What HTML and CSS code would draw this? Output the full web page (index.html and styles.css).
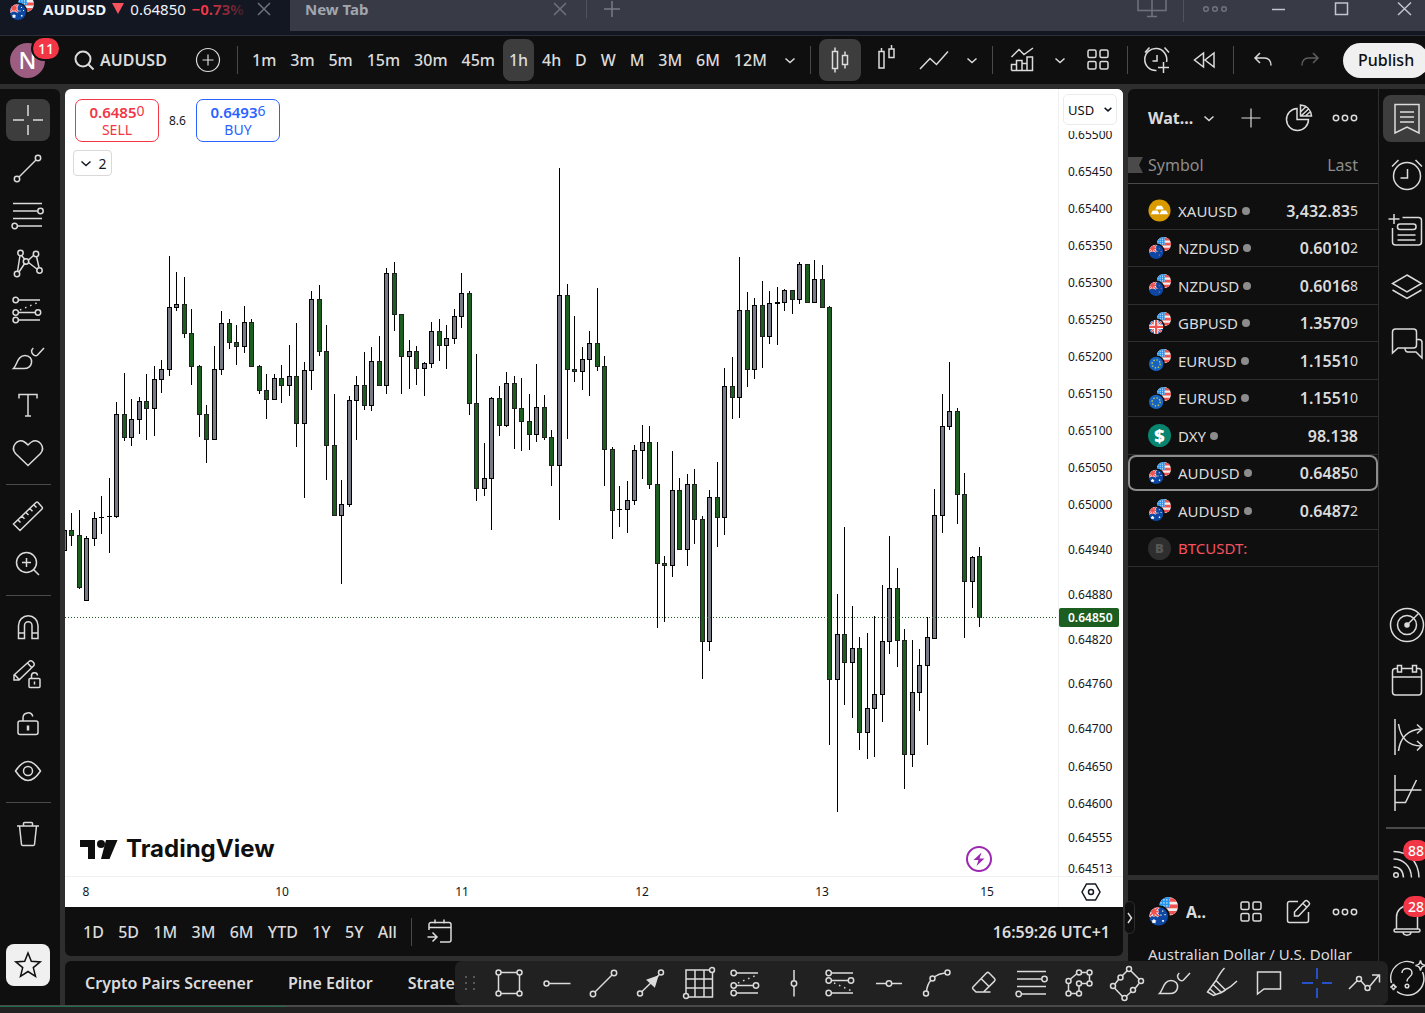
FILE: index.html
```html
<!DOCTYPE html>
<html lang="en">
<head>
    <meta charset="UTF-8">
    <meta name="viewport" content="width=device-width, initial-scale=1.0">
    <title>AUDUSD 0.64850</title>
    <link rel="stylesheet" href="styles.css">
</head>
<body>

    <!-- Icon sprite -->
    <svg class="sprite" aria-hidden="true">
        <symbol id="i-cross" viewBox="0 0 32 32"><path d="M16 1v11M16 21v10M1 16h11M21 16h10"/></symbol>
        <symbol id="i-trend" viewBox="0 0 32 32"><path d="M7 25L24 8"/><circle cx="5" cy="27" r="2.7"/><circle cx="26" cy="6" r="2.7"/></symbol>
        <symbol id="i-fib" viewBox="0 0 32 32"><path d="M1 4.5h29M1 12h24.5M1 19.5h29M5 27h25"/><circle cx="28.5" cy="12" r="2.7"/><circle cx="2.7" cy="27" r="2.7"/></symbol>
        <symbol id="i-pattern" viewBox="0 0 32 32"><path d="M5.500 24.500L8 8.500M7 25l6-9M9.500 8.500l3.500 4M16.500 13l5.500-5M16.500 15.500l9 7M24.500 9.500L27 20.500"/><circle cx="8.500" cy="6" r="2.7"/><circle cx="24" cy="7" r="2.7"/><circle cx="14" cy="14.500" r="2.7"/><circle cx="5" cy="27" r="2.7"/><circle cx="27.500" cy="23.500" r="2.7"/></symbol>
        <symbol id="i-forecast" viewBox="0 0 32 32"><path d="M6.500 6H28M6.500 18.500h17M6.500 26H28"/><path stroke-dasharray="1.500 4" d="M8 16l19-8"/><circle cx="3.700" cy="6" r="2.7"/><circle cx="3.700" cy="18.500" r="2.7"/><circle cx="26" cy="18.500" r="2.7"/><circle cx="3.700" cy="26" r="2.7"/></symbol>
        <symbol id="i-brush" viewBox="0 0 32 32"><path d="M1.500 26.500C5 23.500 5.500 13.500 13 13.500c4.500 0 7.500 3.500 6.500 7.500-.8 3.500-3.500 5.500-7.500 5.500zM32 6l-6.500 7c-1 1-2.500 1-3.700 0-2.300-1.500-3.300-4.500-.5-7"/></symbol>
        <symbol id="i-text" viewBox="0 0 32 32"><path d="M7 9.500V5.500h18v4M16 5.500v21.500M13 27h6"/></symbol>
        <symbol id="i-heart" viewBox="0 0 32 32"><path d="M16 28.500L3.500 16.500C-2 10 5.500.500 12.500 5 14 6 15 7 16 8c1-1 2-2 3.500-3C26.500.500 34 10 28.500 16.500z"/></symbol>
        <symbol id="i-ruler" viewBox="0 0 32 32"><path d="M1.500 24L24 2.500c.6-.6 1.400-.6 2 0L30 7c.6.600.6 1.400 0 2L8 30.500zM6 20l2.500 2.500M10 16.200l2.500 2.500M14 12.500l2.500 2.500M18 8.700l2.500 2.500M22 5l2.500 2.500"/></symbol>
        <symbol id="i-zoom" viewBox="0 0 32 32"><circle cx="14.500" cy="14.500" r="10"/><path d="M21.500 21.500l5.500 5.500M14.500 10v9M10 14.500h9"/></symbol>
        <symbol id="i-magnet" viewBox="0 0 32 32"><path d="M6.500 27.500V14.500a9.700 9.700 0 0 1 19.500 0v13h-6V14.500a3.700 3.700 0 0 0-7.500 0v13zM6.500 22h6M20 22h6"/></symbol>
        <symbol id="i-penlock" viewBox="0 0 32 32"><path d="M2 21v-5L17 2.500c1-1 2.500-1 3.500 0l1 1c1 1 1 2.500 0 3.500L7 21zM2.500 15.500L7.500 21M15.500 4l4.500 5M18 19.500h9c.6 0 1 .4 1 1v7c0 .6-.4 1-1 1h-9c-.6 0-1-.4-1-1v-7c0-.6.4-1 1-1zM19.500 19.500v-2.500a3 3 0 0 1 6-.500M22.500 22.500v3"/></symbol>
        <symbol id="i-lock" viewBox="0 0 32 32"><rect x="6" y="14" width="20" height="13.500" rx="2"/><path d="M11 14v-3.500a5 5 0 0 1 9.800-1"/><path stroke-width="2.500" d="M16 18.500v5"/></symbol>
        <symbol id="i-eye" viewBox="0 0 32 32"><path d="M3.500 16C7.500 10 11.500 6.500 16 6.500s8.500 3.500 12.500 9.500c-4 6-8 9.500-12.500 9.500S7.500 22 3.500 16z"/><circle cx="16" cy="16" r="4.500"/></symbol>
        <symbol id="i-trash" viewBox="0 0 32 32"><path d="M5 8h22M7.500 8l2 18.500c.1.700.6 1 1.200 1h10.600c.6 0 1.100-.3 1.200-1L24.500 8M11.500 8V5.500c0-.6.4-1 1-1h7c.6 0 1 .4 1 1V8"/></symbol>
        <symbol id="i-star" viewBox="0 0 32 32"><path d="M16 4l3.300 8.300 8.900.6-6.900 5.700 2.200 8.700L16 22.500l-7.500 4.800 2.200-8.700-6.900-5.700 8.900-.6z"/></symbol>
        <symbol id="i-search" viewBox="0 0 32 32"><circle cx="15" cy="15" r="7.500"/><path d="M20.500 20.500l5 5"/></symbol>
        <symbol id="i-addcircle" viewBox="0 0 32 32"><circle cx="16" cy="16" r="11.500"/><path d="M16 10.500v11M10.500 16h11"/></symbol>
        <symbol id="i-chevron" viewBox="0 0 16 16"><path d="M3.500 6.500L8 10.500l4.500-4"/></symbol>
        <symbol id="i-candles" viewBox="0 0 32 32"><path d="M8.500 7.500h5v17h-5zM11 3.500v4M11 24.500v4M18.500 11.500h5v9h-5zM21 7.500v4M21 20.500v4"/></symbol>
        <symbol id="i-hilo" viewBox="0 0 32 32"><path d="M8 7.500h5v16.500H8zM10.500 4v3.500M18 5h5v8.500h-5zM20.500 1v4"/></symbol>
        <symbol id="i-line" viewBox="0 0 32 32"><path d="M2 25l10-10.500 6.500 6L30 7.500"/></symbol>
        <symbol id="i-indicators" viewBox="0 0 32 32"><path d="M5.500 13l7.500-7.500 5 5L27 4M5.500 26.500v-6h5v6M10.500 26.500V16.500h5.500v10M16 26.500v-7h5v7M21 26.500V13h5.500v13.500zM5.500 26.500h21"/></symbol>
        <symbol id="i-grid" viewBox="0 0 32 32"><rect x="6" y="6" width="8" height="7.500" rx="1.500"/><rect x="18" y="6" width="8" height="7.500" rx="1.500"/><rect x="6" y="17.500" width="8" height="7.500" rx="1.500"/><rect x="18" y="17.500" width="8" height="7.500" rx="1.500"/></symbol>
        <symbol id="i-alertadd" viewBox="0 0 32 32"><path d="M15.500 26.500A11 11 0 1 1 25.500 18M16 11v6h-4.500M4 8.500l4.500-5M23.500 3.500l4.500 5M22.500 18v11M17 23.500h11"/></symbol>
        <symbol id="i-rewind" viewBox="0 0 32 32"><path d="M15.500 9v14L6.500 16zM26 9v14L17 16z"/></symbol>
        <symbol id="i-undo" viewBox="0 0 32 32"><path d="M13 9L8 14l5 5M8 14h9.500c4 0 6.500 3 6.500 7.500"/></symbol>
        <symbol id="i-redo" viewBox="0 0 32 32"><path d="M19 9l5 5-5 5M24 14h-9.500c-4 0-6.500 3-6.500 7.500"/></symbol>
        <symbol id="i-plus" viewBox="0 0 32 32"><path d="M16 6.500v19M6.500 16h19"/></symbol>
        <symbol id="i-pie" viewBox="0 0 32 32"><path d="M15 6.500A11 11 0 1 0 26.500 17.500H15zM18.500 3c6.500.5 10.500 5 11 11h-11zM19 9.500l5-5M19 14l8-7.500M24 13.500l4.500-4"/></symbol>
        <symbol id="i-dots" viewBox="0 0 32 32"><circle cx="7" cy="16" r="2.700"/><circle cx="16" cy="16" r="2.700"/><circle cx="25" cy="16" r="2.700"/></symbol>
        <symbol id="i-edit" viewBox="0 0 32 32"><path d="M16 5.500H7.500c-1.100 0-2 .9-2 2v17c0 1.100.9 2 2 2h17c1.100 0 2-.9 2-2V16M12.500 20v-4L23 5c.8-.8 1.700-.8 2.500 0l1.500 1.500c.8.800.8 1.700 0 2.500L16.500 20zM21 7.500l3.500 3.500"/></symbol>
        <symbol id="i-goto" viewBox="0 0 32 32"><path d="M5 14V8.500c0-1.100.9-2 2-2h18c1.100 0 2 .9 2 2V24c0 1.100-.9 2-2 2h-9M5 11.500h22M11 3.500v4M20 3.500v4M3.500 21h9M8.500 16.500l4.500 4.500-4.500 4.500"/></symbol>
        <symbol id="i-list" viewBox="0 0 32 32"><path d="M4 1.500h24v28.500l-12-6-12 6zM9 9h14M9 14h14M9 19h14"/></symbol>
        <symbol id="i-alarm" viewBox="0 0 32 32"><circle cx="16" cy="17" r="13.500"/><path d="M16.500 10v9h-7M1 7.500L7.500 1M24.500 1L31 7.500"/></symbol>
        <symbol id="i-news" viewBox="0 0 32 32"><path d="M11.500 2.500H27.500c1.700 0 3 1.300 3 3V27c0 1.700-1.300 3-3 3H4.500c-1.700 0-3-1.300-3-3V13M3-1v10M-2.500 4h11M6.500 20h18M6.500 25h18"/><rect x="6.500" y="9" width="18.500" height="5.500" rx="2.500"/></symbol>
        <symbol id="i-layers" viewBox="0 0 32 32"><path d="M16 4l14.500 8.500L16 21 1.500 12.500zM1.500 19L16 27.500 30.500 19"/></symbol>
        <symbol id="i-chat" viewBox="0 0 32 32"><path d="M1.500 26V5c0-1.700 1.300-3 3-3h18c1.700 0 3 1.300 3 3v13c0 1.700-1.300 3-3 3H7zM25.500 12.500H28c1.700 0 3 1.300 3 3V31l-6-6h-8c-2 0-3-1.500-3-4"/></symbol>
        <symbol id="i-radar" viewBox="0 0 36 36"><circle cx="18" cy="18" r="16.500"/><circle cx="18" cy="18" r="9.500"/><circle cx="18" cy="18" r="2" fill="currentColor"/><path d="M18 18L29.500 6.500"/></symbol>
        <symbol id="i-calendar" viewBox="0 0 32 32"><path d="M6 3.500H4.500c-1.700 0-3 1.300-3 3V27c0 1.700 1.300 3 3 3h23c1.700 0 3-1.300 3-3V6.500c0-1.700-1.300-3-3-3H26M10.500 3.500h11M1.500 12h29M6.500.500h4V7h-4zM21.500.500h4V7h-4z"/></symbol>
        <symbol id="i-paths" viewBox="0 0 36 36"><path d="M6 0v36M9.500 5c2 13 9 22 23 22M9.500 32C11 19 19 10.500 32.500 10M28 5.500l5 4.500-5 4.500M28 22l5 4.500-5 5"/></symbol>
        <symbol id="i-range" viewBox="0 0 36 36"><path d="M6 0v36M6 15h26.500M6 27.500h10.500L27.500 5"/></symbol>
        <symbol id="i-feed" viewBox="0 0 32 32"><circle cx="5" cy="28" r="2.300"/><path d="M2.500 20c6 0 9.500 3.500 10 10.500M2.500 12c10 0 17.500 7 18 18.500M2.500 4.500C17 4.500 27.500 14 28 30.500"/></symbol>
        <symbol id="i-bell" viewBox="0 0 32 32"><path d="M5.500 26V14C5.500 8 10 3 16 3s10.500 5 10.500 11v12M4.500 26h23c2 0 2 3 0 3h-23c-2 0-2-3 0-3zM12 29.500c.5 3.500 7.500 3.500 8 0"/></symbol>
        <symbol id="i-help" viewBox="0 0 36 36"><path d="M25 3A16.500 16.500 0 0 0 2.500 23M8 31.500A16.500 16.500 0 0 0 33.500 12M13 13c0-6 10-6 10 0 0 4.500-5 3.500-5 8.500M31.500.500c.8 3.500 1.500 4.200 5 5-3.500.8-4.200 1.500-5 5-.8-3.500-1.500-4.200-5-5 3.500-.8 4.200-1.500 5-5zM4.500 24c.5 2 1 2.500 3 3-2 .5-2.500 1-3 3-.5-2-1-2.500-3-3 2-.5 2.500-1 3-3z"/><circle cx="18" cy="26" r="1.800"/></symbol>
        <symbol id="i-rect" viewBox="0 0 32 32"><path d="M5.500 8v16M26.500 8v16M8 5.500h16M8 26.500h16"/><circle cx="5.500" cy="5.500" r="2.500"/><circle cx="26.500" cy="5.500" r="2.500"/><circle cx="5.500" cy="26.500" r="2.500"/><circle cx="26.500" cy="26.500" r="2.500"/></symbol>
        <symbol id="i-hray" viewBox="0 0 32 32"><path d="M9 16.500h21.500"/><circle cx="6.500" cy="16.500" r="2.500"/></symbol>
        <symbol id="i-arrow" viewBox="0 0 32 32"><path d="M6.500 25L24 8"/><path d="M22.500 9.500l-3 10-7-6.500z" fill="currentColor"/><circle cx="5" cy="26.500" r="2.500"/><circle cx="26" cy="5.500" r="2.500"/></symbol>
        <symbol id="i-fibgrid" viewBox="0 0 32 32"><path d="M3 26.500V3h24M29.500 5.500V30H5M12 3v27M21 3v27M3 12h26.500M3 21h26.500"/><circle cx="29" cy="3" r="2.500"/><circle cx="3" cy="29" r="2.500"/></symbol>
        <symbol id="i-vline" viewBox="0 0 32 32"><path d="M16 3v10.500M16 19v10.500"/><circle cx="16" cy="16.500" r="2.700"/></symbol>
        <symbol id="i-short" viewBox="0 0 32 32"><path d="M6.500 6H28M6.500 13.500h17M6.500 26H28"/><path stroke-dasharray="1.500 4" d="M9 16l18 8"/><circle cx="3.700" cy="6" r="2.7"/><circle cx="3.700" cy="13.500" r="2.7"/><circle cx="26" cy="13.500" r="2.7"/><circle cx="3.700" cy="26" r="2.7"/></symbol>
        <symbol id="i-hline" viewBox="0 0 32 32"><path d="M3 16.500h10.500M19 16.500h10"/><circle cx="16" cy="16.500" r="2.700"/></symbol>
        <symbol id="i-curve" viewBox="0 0 32 32"><path d="M5.500 24c.5-4 2-8 4.500-11M13 10c3-2 6.500-3.500 11-4"/><circle cx="5" cy="26.500" r="2.500"/><circle cx="11.500" cy="11.500" r="2.500"/><circle cx="26.500" cy="5.500" r="2.500"/></symbol>
        <symbol id="i-eraser" viewBox="0 0 32 32"><path d="M5 20L18.500 6c.8-.8 1.800-.8 2.600 0l5.400 5.500c.8.800.8 1.800 0 2.600L15.500 25H8l-3-3c-.6-.6-.6-1.400 0-2zM13 11.500l8.500 8.500M15.500 25h7"/></symbol>
        <symbol id="i-polyline" viewBox="0 0 32 32"><path d="M5.500 24V16M7.500 12l6-5M18 5.500h5.500M26.500 8v6M24 16.500h-5.500M16 19v5.500M8 26.500h5.500"/><circle cx="5.500" cy="26.500" r="2.500"/><circle cx="5.500" cy="14" r="2.500"/><circle cx="16" cy="5.500" r="2.500"/><circle cx="26.500" cy="5.500" r="2.500"/><circle cx="26.500" cy="16.500" r="2.500"/><circle cx="16" cy="16.500" r="2.500"/><circle cx="16" cy="26.500" r="2.500"/></symbol>
        <symbol id="i-rotated" viewBox="0 0 36 36"><path d="M6 19l3.500-4.500M13.500 10.500l5-5M22 6l8.500 8.500M30 18.500l-4 5M22 27l-4.500 4M13.500 31.500L5.500 23"/><circle cx="4" cy="21" r="2.500"/><circle cx="11.500" cy="12.500" r="2.500"/><circle cx="20" cy="4" r="2.500"/><circle cx="32" cy="16" r="2.500"/><circle cx="24" cy="25" r="2.500"/><circle cx="15.500" cy="33" r="2.500"/></symbol>
        <symbol id="i-marker" viewBox="0 0 32 32"><path d="M18.500 1C15 4.500 13 8 10 13.500M31 14c-4 4-7 6.500-12 9M9.500 13l10 10M10 13.500l-3 4 8.500 8 4-2.500M7 17.500L1.500 25l6 3.500 8-3M4 22l6 5.500"/></symbol>
        <symbol id="i-callout" viewBox="0 0 32 32"><path d="M4.500 5h23v17H11l-6.500 5z"/></symbol>
        <symbol id="i-zigzag" viewBox="0 0 32 32"><path d="M1 22l8-8M13 14l4.500 5M22 19L31 8M24 8h7.500v7.500"/><circle cx="11" cy="12" r="2.500"/><circle cx="19.500" cy="21" r="2.500"/></symbol>

        <!-- Flags -->
        <symbol id="f-us" viewBox="0 0 16 16"><clipPath id="round"><circle cx="8" cy="8" r="8"/></clipPath><g clip-path="url(#round)" stroke="none"><path fill="#f0f0f0" d="M0 0h16v16H0z"/><path fill="#ef5350" d="M0 1h16v3H0zM0 6.500h16v3H0zM0 12h16v3H0z"/><path fill="#2196f3" d="M0 0h9v9H0z"/><path stroke="#bbdefb" stroke-dasharray="1 1.500" d="M1 2.500h8M1 5h8M1 7.500h8"/></g></symbol>
        <symbol id="f-au" viewBox="0 0 16 16"><g clip-path="url(#round)" stroke="none"><path fill="#0d47a1" d="M0 0h16v16H0z"/><path stroke="#fff" stroke-width="2.500" d="M0 0l8 8M0 8L8 0M4 0v8M0 4h8"/><path stroke="#ef5350" d="M0 0l8 8M0 8L8 0M4 0v8M0 4h8"/><path fill="#fff" d="M4 10l.8 1.200 1.400.3-.9 1.100.1 1.400L4 13.500 2.600 14l.1-1.400-.9-1.100 1.400-.3zM11 3h1v1h-1zM9.500 6.500h1v1h-1zM13 6h1v1h-1zM11 11h1.500v1.500H11z"/></g></symbol>
        <symbol id="f-nz" viewBox="0 0 16 16"><g clip-path="url(#round)" stroke="none"><path fill="#0d47a1" d="M0 0h16v16H0z"/><path stroke="#fff" stroke-width="2.500" d="M0 0l8 8M0 8L8 0M4 0v8M0 4h8"/><path stroke="#ef5350" d="M0 0l8 8M0 8L8 0M4 0v8M0 4h8"/><path fill="#ef5350" d="M11 4h1.200v1.200H11zM9 7h1.200v1.200H9zM13 7h1.200v1.200H13zM11 11h1.200v1.200H11z"/></g></symbol>
        <symbol id="f-gb" viewBox="0 0 16 16"><g clip-path="url(#round)" stroke="none"><path fill="#1565c0" d="M0 0h16v16H0z"/><path stroke="#fff" stroke-width="2.500" d="M0 0l16 16M16 0L0 16"/><path stroke="#ef5350" d="M0 0l16 16M16 0L0 16"/><path stroke="#fff" stroke-width="5" d="M8 0v16M0 8h16"/><path stroke="#ef5350" stroke-width="2.500" d="M8 0v16M0 8h16"/></g></symbol>
        <symbol id="f-eu" viewBox="0 0 16 16"><circle cx="8" cy="8" r="8" fill="#1565c0" stroke="none"/><circle cx="8" cy="8" r="4.500" stroke="#d4cf5a" stroke-width="1.500" stroke-dasharray="1.500 2"/></symbol>
        <symbol id="p-au" viewBox="0 0 24 24"><use href="#f-us" x="9" y="0" width="15" height="15"/><circle cx="8.500" cy="15.500" r="9" fill="#0f0f0f" stroke="none"/><use href="#f-au" x="1" y="8" width="15" height="15"/></symbol>
        <symbol id="p-nz" viewBox="0 0 24 24"><use href="#f-us" x="9" y="0" width="15" height="15"/><circle cx="8.500" cy="15.500" r="9" fill="#0f0f0f" stroke="none"/><use href="#f-nz" x="1" y="8" width="15" height="15"/></symbol>
        <symbol id="p-gb" viewBox="0 0 24 24"><use href="#f-us" x="9" y="0" width="15" height="15"/><circle cx="8.500" cy="15.500" r="9" fill="#0f0f0f" stroke="none"/><use href="#f-gb" x="1" y="8" width="15" height="15"/></symbol>
        <symbol id="p-eu" viewBox="0 0 24 24"><use href="#f-us" x="9" y="0" width="15" height="15"/><circle cx="8.500" cy="15.500" r="9" fill="#0f0f0f" stroke="none"/><use href="#f-eu" x="1" y="8" width="15" height="15"/></symbol>
        <symbol id="p-gold" viewBox="0 0 24 24"><circle cx="12" cy="12" r="11.500" fill="#d99a00" stroke="none"/><path fill="#fff" stroke="none" d="M9.500 7h5l2 4h-9zM5 12h5l2 4H3zM14 12h5l2 4h-9z"/></symbol>
    </svg>

    <div class="app">
        <header class="titlebar">
            <div class="tab active">
                <svg class="tab-flag" viewBox="0 0 24 20" aria-hidden="true"><use href="#f-us" x="8" y="-4" width="16" height="16"/><circle cx="8" cy="12" r="9.500" fill="#131722" stroke="none"/><use href="#f-au" x="0" y="4" width="16" height="16"/></svg>
                <strong>AUDUSD</strong>
                <span class="down"></span>
                <span>0.64850</span>
                <strong class="fade">−0.73%</strong>
                <button class="tab-x" aria-label="Close tab"><svg viewBox="0 0 14 14"><path d="M1 1l12 12M13 1L1 13"/></svg></button>
            </div>
            <div class="tab">
                <strong>New Tab</strong>
                <button class="tab-x" aria-label="Close tab"><svg viewBox="0 0 14 14"><path d="M1 1l12 12M13 1L1 13"/></svg></button>
            </div>
            <button class="tab-new" aria-label="New tab"><svg viewBox="0 0 16 18"><path d="M8 1v16M0 9h16"/></svg></button>
            <div class="window-buttons">
                <button class="dim" aria-label="Layout"><svg viewBox="0 0 30 18"><path d="M1 0v10.500h28V0M15 0v16.500M10 16.500h10"/></svg></button>
                <button class="dim more" aria-label="Menu"><svg viewBox="0 0 30 18"><circle cx="6" cy="9" r="2.300"/><circle cx="15" cy="9" r="2.300"/><circle cx="24" cy="9" r="2.300"/></svg></button>
                <button aria-label="Minimize"><svg viewBox="0 0 30 18"><path d="M9 9.500h13"/></svg></button>
                <button aria-label="Maximize"><svg viewBox="0 0 30 18"><path d="M9.500 3h12v11.500h-12z"/></svg></button>
                <button aria-label="Close"><svg viewBox="0 0 30 18"><path d="M9 2.500l13 12.500M22 2.500L9 15"/></svg></button>
            </div>
        </header>

        <nav class="toolbar">
            <button class="avatar" aria-label="Account">N<span class="badge">11</span></button>
            <button class="symbol"><svg class="icon"><use href="#i-search"/></svg>AUDUSD</button>
            <button class="tool" aria-label="Compare"><svg class="icon thin"><use href="#i-addcircle"/></svg></button>
            <span class="sep"></span>
            <div class="intervals">
                <button>1m</button>
                <button>3m</button>
                <button>5m</button>
                <button>15m</button>
                <button>30m</button>
                <button>45m</button>
                <button class="on">1h</button>
                <button>4h</button>
                <button>D</button>
                <button>W</button>
                <button>M</button>
                <button>3M</button>
                <button>6M</button>
                <button>12M</button>
            </div>
            <button class="more-btn" aria-label="More intervals"><svg class="chev"><use href="#i-chevron"/></svg></button>
            <span class="sep"></span>
            <button class="tool on" aria-label="Candles"><svg class="icon"><use href="#i-candles"/></svg></button>
            <button class="tool" aria-label="Hollow candles"><svg class="icon"><use href="#i-hilo"/></svg></button>
            <button class="tool" aria-label="Line"><svg class="icon"><use href="#i-line"/></svg></button>
            <button class="more-btn" aria-label="More styles"><svg class="chev"><use href="#i-chevron"/></svg></button>
            <span class="sep"></span>
            <button class="tool" aria-label="Indicators"><svg class="icon"><use href="#i-indicators"/></svg></button>
            <button class="more-btn" aria-label="More indicators"><svg class="chev"><use href="#i-chevron"/></svg></button>
            <button class="tool" aria-label="Layouts"><svg class="icon"><use href="#i-grid"/></svg></button>
            <span class="sep"></span>
            <button class="tool" aria-label="Alert"><svg class="icon"><use href="#i-alertadd"/></svg></button>
            <button class="tool" aria-label="Replay"><svg class="icon"><use href="#i-rewind"/></svg></button>
            <span class="sep"></span>
            <button class="tool" aria-label="Undo"><svg class="icon"><use href="#i-undo"/></svg></button>
            <button class="tool off" aria-label="Redo"><svg class="icon"><use href="#i-redo"/></svg></button>
            <button class="publish">Publish</button>
        </nav>

        <div class="main">
            <aside class="drawing">
                <div class="group group-lines">
                    <button class="tool on" aria-label="Cross"><svg class="icon"><use href="#i-cross"/></svg></button>
                    <button class="tool" aria-label="Trend line"><svg class="icon"><use href="#i-trend"/></svg></button>
                    <button class="tool" aria-label="Fib retracement"><svg class="icon"><use href="#i-fib"/></svg></button>
                    <button class="tool" aria-label="Patterns"><svg class="icon"><use href="#i-pattern"/></svg></button>
                    <button class="tool" aria-label="Forecast"><svg class="icon"><use href="#i-forecast"/></svg></button>
                    <button class="tool" aria-label="Brush"><svg class="icon"><use href="#i-brush"/></svg></button>
                    <button class="tool" aria-label="Text"><svg class="icon"><use href="#i-text"/></svg></button>
                    <button class="tool" aria-label="Icons"><svg class="icon"><use href="#i-heart"/></svg></button>
                </div>
                <hr>
                <div class="group">
                    <button class="tool" aria-label="Measure"><svg class="icon"><use href="#i-ruler"/></svg></button>
                    <button class="tool" aria-label="Zoom in"><svg class="icon"><use href="#i-zoom"/></svg></button>
                </div>
                <hr>
                <div class="group">
                    <button class="tool" aria-label="Magnet"><svg class="icon"><use href="#i-magnet"/></svg></button>
                    <button class="tool" aria-label="Keep drawing"><svg class="icon"><use href="#i-penlock"/></svg></button>
                    <button class="tool" aria-label="Lock"><svg class="icon"><use href="#i-lock"/></svg></button>
                    <button class="tool" aria-label="Hide"><svg class="icon"><use href="#i-eye"/></svg></button>
                </div>
                <hr>
                <div class="group">
                    <button class="tool" aria-label="Remove"><svg class="icon"><use href="#i-trash"/></svg></button>
                </div>
                <button class="tool star" aria-label="Favorites"><svg class="icon"><use href="#i-star"/></svg></button>
            </aside>

            <section class="center">
                <div class="chart">
                    <div class="pane">
                        <svg class="plot" id="plot"></svg>
                        <div class="trade">
                            <button class="sell"><b>0.6485<sup>0</sup></b>SELL</button>
                            <span>8.6</span>
                            <button class="buy"><b>0.6493<sup>6</sup></b>BUY</button>
                        </div>
                        <button class="legend"><svg class="chev"><use href="#i-chevron"/></svg>2</button>
                        <div class="brand">
                            <svg viewBox="0 0 38 19" aria-hidden="true"><path d="M0 0h15v19H8V7H0zM26 0h11.500l-8 19H21z"/><circle cx="21" cy="4" r="4"/></svg>
                            TradingView
                        </div>
                        <button class="flash" aria-label="Events"><svg viewBox="0 0 28 28"><circle cx="14" cy="14" r="12"/><path class="bolt" d="M16.500 7.500L8.500 15h5l-2 6 8-7.500h-5z"/></svg></button>
                    </div>
                    <div class="price-axis">
                        <svg class="prices" id="prices"></svg>
                        <div class="currency">
                            <select aria-label="Currency"><option>USD</option></select>
                            <svg class="chev"><use href="#i-chevron"/></svg>
                        </div>
                    </div>
                    <svg class="time-axis" id="times"></svg>
                    <button class="gear" aria-label="Chart settings"><svg viewBox="0 0 20 18"><path d="M5.500 1h9L19 9l-4.500 8h-9L1 9z"/><circle cx="10" cy="9" r="2.500"/></svg></button>
                </div>
                <div class="range-bar">
                    <div class="ranges">
                        <button>1D</button>
                        <button>5D</button>
                        <button>1M</button>
                        <button>3M</button>
                        <button>6M</button>
                        <button>YTD</button>
                        <button>1Y</button>
                        <button>5Y</button>
                        <button>All</button>
                    </div>
                    <span class="sep"></span>
                    <button class="tool" aria-label="Go to date"><svg class="icon"><use href="#i-goto"/></svg></button>
                    <button class="clock">16:59:26 UTC+1</button>
                </div>
                <div class="bottom-tabs">
                    <button>Crypto Pairs Screener</button>
                    <button>Pine Editor</button>
                    <button>Strategy Tester</button>
                </div>
            </section>

            <section class="side">
                <button class="handle" aria-label="Collapse"><svg viewBox="0 0 6 12"><path d="M1 1l3.500 5L1 11"/></svg></button>
                <div class="watchlist">
                    <div class="side-head">
                        <button class="list-name">Wat...<svg class="chev"><use href="#i-chevron"/></svg></button>
                        <button class="tool" aria-label="Add symbol"><svg class="icon thin"><use href="#i-plus"/></svg></button>
                        <button class="tool" aria-label="Advanced view"><svg class="icon"><use href="#i-pie"/></svg></button>
                        <button class="tool" aria-label="Settings"><svg class="icon"><use href="#i-dots"/></svg></button>
                    </div>
                    <table>
                        <thead>
                            <tr><th><svg class="flag" viewBox="0 0 15 16"><path d="M0 0h15l-4 8 4 8H0z"/></svg>Symbol</th><th>Last</th></tr>
                        </thead>
                        <tbody>
                            <tr><td><svg class="pair"><use href="#p-gold"/></svg><span>XAUUSD</span><i></i></td><td>3,432.83<sup>5</sup></td></tr>
                            <tr><td><svg class="pair"><use href="#p-nz"/></svg><span>NZDUSD</span><i></i></td><td>0.6010<sup>2</sup></td></tr>
                            <tr><td><svg class="pair"><use href="#p-nz"/></svg><span>NZDUSD</span><i></i></td><td>0.6016<sup>8</sup></td></tr>
                            <tr><td><svg class="pair"><use href="#p-gb"/></svg><span>GBPUSD</span><i></i></td><td>1.3570<sup>9</sup></td></tr>
                            <tr><td><svg class="pair"><use href="#p-eu"/></svg><span>EURUSD</span><i></i></td><td>1.1551<sup>0</sup></td></tr>
                            <tr><td><svg class="pair"><use href="#p-eu"/></svg><span>EURUSD</span><i></i></td><td>1.1551<sup>0</sup></td></tr>
                            <tr><td><b class="coin usd">$</b><span>DXY</span><i></i></td><td>98.138</td></tr>
                            <tr class="selected"><td><svg class="pair"><use href="#p-au"/></svg><span>AUDUSD</span><i></i></td><td>0.6485<sup>0</sup></td></tr>
                            <tr><td><svg class="pair"><use href="#p-au"/></svg><span>AUDUSD</span><i></i></td><td>0.6487<sup>2</sup></td></tr>
                            <tr class="error"><td><b class="coin">B</b><span>BTCUSDT:</span></td><td></td></tr>
                        </tbody>
                    </table>
                </div>
                <div class="details">
                    <div class="side-head">
                        <button class="list-name"><svg class="pair big"><use href="#p-au"/></svg>A..</button>
                        <button class="tool" aria-label="Widgets"><svg class="icon"><use href="#i-grid"/></svg></button>
                        <button class="tool" aria-label="Note"><svg class="icon"><use href="#i-edit"/></svg></button>
                        <button class="tool" aria-label="More"><svg class="icon"><use href="#i-dots"/></svg></button>
                    </div>
                    <p>Australian Dollar / U.S. Dollar</p>
                </div>
            </section>

            <aside class="rail">
                <button class="tool on" aria-label="Watchlist"><svg class="icon"><use href="#i-list"/></svg></button>
                <button class="tool" aria-label="Alerts"><svg class="icon"><use href="#i-alarm"/></svg></button>
                <button class="tool" aria-label="News"><svg class="icon"><use href="#i-news"/></svg></button>
                <button class="tool" aria-label="Object tree"><svg class="icon"><use href="#i-layers"/></svg></button>
                <button class="tool" aria-label="Chats"><svg class="icon"><use href="#i-chat"/></svg></button>
                <button class="tool push" aria-label="Screeners"><svg class="icon large"><use href="#i-radar"/></svg></button>
                <button class="tool" aria-label="Calendars"><svg class="icon"><use href="#i-calendar"/></svg></button>
                <button class="tool" aria-label="Options"><svg class="icon large"><use href="#i-paths"/></svg></button>
                <button class="tool" aria-label="Options chain"><svg class="icon large"><use href="#i-range"/></svg></button>
                <hr>
                <button class="tool" aria-label="Ideas stream"><svg class="icon"><use href="#i-feed"/></svg><span class="badge">88</span></button>
                <button class="tool" aria-label="Notifications"><svg class="icon"><use href="#i-bell"/></svg><span class="badge">28</span></button>
                <button class="tool help" aria-label="Help"><svg class="icon large"><use href="#i-help"/></svg></button>
            </aside>

            <div class="favorites">
                <svg class="grip" viewBox="0 0 12 16"><path d="M1 1h2v2H1zM9 1h2v2H9zM1 7h2v2H1zM9 7h2v2H9zM1 13h2v2H1zM9 13h2v2H9z"/></svg>
                <button aria-label="Rectangle"><svg class="icon"><use href="#i-rect"/></svg></button>
                <button aria-label="Horizontal ray"><svg class="icon"><use href="#i-hray"/></svg></button>
                <button aria-label="Trend line"><svg class="icon"><use href="#i-trend"/></svg></button>
                <button aria-label="Arrow"><svg class="icon"><use href="#i-arrow"/></svg></button>
                <button aria-label="Gann box"><svg class="icon"><use href="#i-fibgrid"/></svg></button>
                <button aria-label="Long position"><svg class="icon"><use href="#i-forecast"/></svg></button>
                <button aria-label="Vertical line"><svg class="icon"><use href="#i-vline"/></svg></button>
                <button aria-label="Short position"><svg class="icon"><use href="#i-short"/></svg></button>
                <button aria-label="Horizontal line"><svg class="icon"><use href="#i-hline"/></svg></button>
                <button aria-label="Curve"><svg class="icon"><use href="#i-curve"/></svg></button>
                <button aria-label="Eraser"><svg class="icon"><use href="#i-eraser"/></svg></button>
                <button aria-label="Fib retracement"><svg class="icon"><use href="#i-fib"/></svg></button>
                <button aria-label="Polyline"><svg class="icon"><use href="#i-polyline"/></svg></button>
                <button aria-label="Rotated rectangle"><svg class="icon large"><use href="#i-rotated"/></svg></button>
                <button aria-label="Brush"><svg class="icon"><use href="#i-brush"/></svg></button>
                <button aria-label="Highlighter"><svg class="icon"><use href="#i-marker"/></svg></button>
                <button aria-label="Callout"><svg class="icon"><use href="#i-callout"/></svg></button>
                <button class="blue" aria-label="Cross"><svg class="icon"><use href="#i-cross"/></svg></button>
                <button aria-label="Path"><svg class="icon"><use href="#i-zigzag"/></svg></button>
            </div>
        </div>

        <footer class="strip"></footer>
    </div>

    <script src="chart.js"></script>
</body>
</html>
```

FILE: styles.css
```css
* {
    box-sizing: border-box;
}

body {
    margin: 0;
    background: #2e2e2e;
    color: #dbdbdb;
    font-family: "Noto Sans", sans-serif;
    font-size: 16px;
    overflow: hidden;
}

button {
    display: flex;
    align-items: center;
    justify-content: center;
    flex-shrink: 0;
    padding: 0;
    border: none;
    background: none;
    color: inherit;
    font: inherit;
    white-space: nowrap;
    cursor: pointer;
}

svg {
    fill: none;
    stroke: currentColor;
    stroke-width: 1.5;
    flex-shrink: 0;
}

.sprite {
    position: absolute;
    width: 0;
    height: 0;
}

.icon {
    width: 32px;
    height: 32px;
    overflow: visible;
}

symbol {
    overflow: visible;
}

.icon.large {
    width: 36px;
    height: 36px;
}

.thin {
    stroke-width: 1.2;
}

.chev {
    width: 16px;
    height: 16px;
}

.app {
    display: flex;
    flex-direction: column;
    height: 100vh;
}

/* Title bar */
.titlebar {
    display: flex;
    align-items: flex-start;
    height: 36px;
    border-bottom: 1px solid #2a2e39;
    background: linear-gradient(#383b46 31px, #131722 31px);
    font-size: 15px;
    line-height: 18px;
}

.tab {
    display: flex;
    align-items: flex-start;
    width: 290px;
    height: 31px;
    padding: 0 12px 0 15px;
    color: #a3a6af;
}

.tab.active {
    gap: 6px;
    padding: 0 18px 0 10px;
    background: #131722;
    color: #f0f3fa;
}

.tab-flag {
    width: 24px;
    height: 20px;
    margin-right: 3px;
}

.down {
    margin-top: 3px;
    border: 6px solid transparent;
    border-top: 11px solid #f7525f;
    border-bottom: 0;
}

.fade {
    background: linear-gradient(90deg, #f23645 30%, #3a1f2c);
    background-clip: text;
    color: transparent;
}

.tab-x {
    width: 16px;
    height: 18px;
    margin-left: auto;
    color: #6f727d;
}

.tab-x svg {
    width: 14px;
    height: 14px;
}

.tab-new {
    width: 50px;
    height: 18px;
    margin-left: 6px;
    border-left: 1px solid #50535e;
    color: #787b86;
}

.tab-new svg {
    width: 16px;
    height: 18px;
}

.window-buttons {
    display: flex;
    margin-left: auto;
    margin-right: -10px;
    color: #c1c4cd;
}

.window-buttons button {
    width: 63px;
    height: 22px;
    padding-bottom: 4px;
}

.window-buttons .dim {
    color: #70737e;
}

.window-buttons .more {
    border-left: 1px solid #50535e;
}

.window-buttons svg {
    width: 30px;
    height: 18px;
}

/* Top toolbar */
.toolbar {
    display: flex;
    align-items: center;
    gap: 5px;
    height: 48px;
    padding-left: 10px;
    background: #0f0f0f;
    overflow: hidden;
    font-weight: 500;
}

.avatar {
    position: relative;
    width: 35px;
    height: 35px;
    border-radius: 50%;
    background: #9c5d80;
    color: #fff;
    font-size: 23px;
}

.badge {
    position: absolute;
    top: -5px;
    right: -14px;
    padding: 0 5px;
    border-radius: 11px;
    background: #f23645;
    box-shadow: 0 0 0 2px #0f0f0f;
    color: #fff;
    font-size: 14px;
    font-weight: 500;
    line-height: 21px;
}

.symbol {
    width: 114px;
    margin-left: 18px;
    justify-content: flex-start;
    font-weight: 600;
}

.symbol .icon {
    stroke-width: 2;
}

.tool {
    position: relative;
    width: 42px;
    height: 42px;
    border-radius: 8px;
}

.tool.on,
.intervals .on {
    background: #3d3d3d;
}

.tool.off {
    color: #5e5e5e;
}

.sep {
    width: 1px;
    height: 28px;
    margin: 0 3px;
    background: #4a4a4a;
    flex-shrink: 0;
}

.intervals,
.ranges {
    display: flex;
    justify-content: space-between;
}

.intervals {
    width: 527px;
    flex-shrink: 0;
}

.intervals button {
    height: 42px;
    padding: 0 6px;
    border-radius: 8px;
}

.more-btn {
    width: 24px;
    height: 42px;
}

.publish {
    height: 35px;
    margin-left: 7px;
    padding: 0 15px;
    border-radius: 18px;
    background: #f0f0f0;
    color: #0f0f0f;
}

/* Main area */
.main {
    position: relative;
    display: flex;
    flex: 1;
    min-height: 0;
    gap: 5px;
    padding-top: 5px;
    overflow: hidden;
}

.drawing {
    display: flex;
    flex-direction: column;
    align-items: center;
    width: 60px;
    padding: 10px 4px 19px 0;
    border-radius: 0 6px 0 0;
    background: #0f0f0f;
    flex-shrink: 0;
}

.drawing .tool {
    width: 44px;
}

.group {
    display: flex;
    flex-direction: column;
    gap: 6px;
}

.group-lines {
    gap: 0;
    justify-content: space-between;
    height: 375px;
}

.drawing hr {
    width: 45px;
    margin: 10px 0;
    border: none;
    border-top: 1px solid #4a4a4a;
}

.drawing .star {
    margin-top: auto;
    background: #f0f0f0;
    color: #0f0f0f;
}

.center {
    display: flex;
    flex-direction: column;
    flex: 1;
    min-width: 0;
}

.chart {
    display: grid;
    grid-template-columns: 1fr 65px;
    grid-template-rows: 1fr 31px;
    flex: 1;
    min-height: 0;
    border-radius: 6px 6px 0 0;
    background: #fff;
    color: #131722;
    overflow: hidden;
}

.pane {
    position: relative;
    min-height: 0;
    overflow: hidden;
}

.plot,
.prices {
    position: absolute;
    inset: 0;
    width: 100%;
    height: 100%;
}

.plot {
    stroke: none;
    shape-rendering: crispEdges;
}

.up {
    fill: #787b86;
    stroke: #000;
    stroke-width: 1;
}

.fall {
    fill: #1b5e20;
    stroke: #212121;
    stroke-width: 1;
}

.wick {
    fill: #000;
}

.last-line {
    stroke: #1b5e20;
    stroke-width: 1;
    stroke-dasharray: 1 2;
}

.trade {
    position: absolute;
    top: 10px;
    left: 10px;
    display: flex;
    align-items: center;
    gap: 10px;
    font-size: 12px;
}

.trade button {
    flex-direction: column;
    width: 84px;
    height: 43px;
    border: 1px solid;
    border-radius: 7px;
    font-size: 14px;
    line-height: 17px;
}

.trade b {
    font-size: 15px;
    font-weight: 600;
}

sup {
    font-size: 14px;
    font-weight: 400;
    line-height: 1;
    vertical-align: 2px;
}

.sell {
    color: #f23645;
}

.buy {
    color: #2962ff;
}

.legend {
    position: absolute;
    top: 61px;
    left: 8px;
    gap: 4px;
    width: 39px;
    height: 26px;
    border: 1px solid #d9d9d9;
    border-radius: 4px;
    font-size: 14px;
}

.brand {
    position: absolute;
    bottom: 10px;
    left: 15px;
    display: flex;
    align-items: center;
    gap: 8px;
    color: #0f0f0f;
    font: 700 24px/34px Inter, sans-serif;
}

.brand svg {
    width: 38px;
    height: 19px;
    fill: currentColor;
    stroke: none;
}

.flash {
    position: absolute;
    bottom: 3px;
    left: 900px;
    color: #9c27b0;
}

.flash svg {
    width: 28px;
    height: 28px;
    stroke-width: 2;
}

.bolt {
    fill: currentColor;
    stroke: none;
}

.price-axis {
    position: relative;
    border-left: 1px solid #f0f0f0;
}

.prices,
.time-axis {
    fill: #131722;
    stroke: none;
    font-size: 12px;
}

.price-tag {
    fill: #1b5e20;
}

.price-tag-text {
    fill: #fff;
    font-weight: 600;
}

.currency {
    position: absolute;
    top: 0;
    left: 0;
    width: 64px;
    height: 42px;
    padding: 5px 6px 5px 4px;
    background: #fff;
}

.currency select {
    width: 54px;
    height: 31px;
    padding: 0 4px;
    border: 1px solid #ebebeb;
    border-radius: 5px;
    appearance: none;
    background: #fff;
    color: #0f0f0f;
    font: 13px "Noto Sans", sans-serif;
}

.currency .chev {
    position: absolute;
    top: 14px;
    right: 9px;
    width: 12px;
    height: 12px;
    stroke-width: 2;
    pointer-events: none;
}

.time-axis {
    width: 100%;
    height: 31px;
    border-top: 1px solid #f0f0f0;
}

.gear {
    border-top: 1px solid #f0f0f0;
    border-left: 1px solid #f0f0f0;
}

.gear svg {
    width: 20px;
    height: 18px;
}

.range-bar {
    display: flex;
    align-items: center;
    gap: 4px;
    height: 49px;
    padding: 0 13px 0 11px;
    border-radius: 0 0 6px 6px;
    background: #0f0f0f;
    font-weight: 500;
}

.ranges {
    width: 328px;
}

.ranges button {
    padding: 0 7px;
}

.clock {
    margin-left: auto;
    font-weight: 600;
}

.bottom-tabs {
    display: flex;
    gap: 35px;
    height: 44px;
    margin-top: 5px;
    padding-left: 20px;
    border-radius: 6px 0 0 0;
    background: #0f0f0f;
    font-weight: 600;
    overflow: hidden;
}

/* Right side */
.side {
    position: relative;
    display: flex;
    flex-direction: column;
    gap: 5px;
    width: 250px;
    flex-shrink: 0;
}

.watchlist {
    flex: 1;
    border-radius: 6px 0 0 0;
    background: #0f0f0f;
}

.side-head {
    display: flex;
    align-items: center;
    gap: 5px;
    height: 58px;
    padding: 0 12px 0 20px;
}

.list-name {
    gap: 8px;
    margin-right: auto;
    font-weight: 700;
}

table,
thead,
tbody {
    display: block;
}

tr {
    display: flex;
    align-items: center;
    justify-content: space-between;
    height: 38px;
    padding: 0 20px;
    border-bottom: 1px solid #2e2e2e;
}

tbody tr:nth-child(even) {
    height: 37px;
}

thead tr {
    height: 37px;
    padding-left: 0;
    border-bottom-color: #4a4a4a;
}

tbody {
    padding-top: 8px;
}

th {
    display: flex;
    align-items: center;
    gap: 5px;
    padding: 0;
    color: #8c8c8c;
    font-weight: 400;
}

.flag {
    width: 15px;
    height: 16px;
    fill: #4a4a4a;
    stroke: none;
}

td {
    display: flex;
    align-items: center;
    padding: 0;
    font-weight: 600;
}

td span {
    max-width: 62px;
    margin-left: 7px;
    overflow: hidden;
    font-size: 15px;
    font-weight: 400;
}

td i {
    width: 8px;
    height: 8px;
    margin-left: 4px;
    border-radius: 50%;
    background: #8c8c8c;
}

.pair {
    width: 23px;
    height: 23px;
}

.pair.big {
    width: 30px;
    height: 30px;
}

.coin {
    width: 23px;
    border-radius: 50%;
    background: #2e2e2e;
    color: #575757;
    font-size: 13px;
    line-height: 23px;
    text-align: center;
}

.coin.usd {
    background: #08856f;
    color: #fff;
    font-size: 18px;
}

.selected {
    border-color: transparent;
    border-radius: 8px;
    box-shadow: inset 0 0 0 2px #8c8c8c;
}

.error {
    color: #f7525f;
}

.error span {
    max-width: 73px;
}

.details {
    height: 125px;
    background: #0f0f0f;
    overflow: hidden;
}

.details .side-head {
    height: 64px;
}

.details p {
    margin: 0 20px;
    font-size: 15px;
    line-height: 20px;
    white-space: nowrap;
}

.handle {
    position: absolute;
    bottom: 71px;
    left: -4px;
    width: 11px;
    height: 33px;
    border: 1px solid #2e2e2e;
    border-radius: 6px;
    background: #0f0f0f;
}

.handle svg {
    width: 6px;
    height: 12px;
}

.rail {
    display: flex;
    flex-direction: column;
    gap: 9px;
    width: 46px;
    margin-left: -4px;
    padding: 6px 0 4px 4px;
    background: #0f0f0f;
    flex-shrink: 0;
}

.rail .tool {
    width: 47px;
    height: 47px;
}

.rail .push {
    margin-top: auto;
}

.rail .help {
    margin-top: 3px;
}

.rail hr {
    width: 47px;
    margin: 2px 0 1px 3px;
    border: none;
    border-top: 2px solid #4a4a4a;
}

.rail .badge {
    top: 1px;
    right: 1px;
    box-shadow: none;
}

.favorites {
    position: absolute;
    right: 37px;
    bottom: 0;
    display: flex;
    align-items: center;
    width: 933px;
    height: 44px;
    border-radius: 7px;
    background: #212121;
}

.favorites button {
    flex: 1;
    height: 44px;
}

.grip {
    width: 12px;
    height: 16px;
    margin: 0 9px;
    fill: #575757;
    stroke: none;
}

.blue {
    color: #2962ff;
}

.strip {
    height: 8px;
    border-top: 1px solid #4a4a4a;
    background: linear-gradient(90deg, #1f6b4a 286px, #4a4a4a 286px) top / 100% 1px no-repeat #212121;
}
```

FILE: chart.js
```javascript
const SVG = 'http://www.w3.org/2000/svg';
const STEP = 7.502;
const TOP = 89;

// high, body top, body bottom, low (screen y), 1 = up candle
const candles = [
    [530,530,551,551,1],[513,530,536,546,0],[510,535,588,589,0],[536,538,601,601,1],[512,518,539,546,1],
    [496,517,518,534,1],[478,516,517,553,1],[402,414,517,518,1],[373,414,438,441,0],[399,419,438,446,1],
    [397,401,420,434,1],[374,401,409,440,0],[366,379,409,436,1],[360,369,380,393,1],[256,307,370,376,1],
    [272,304,308,311,1],[277,304,334,338,0],[309,333,367,385,0],[365,366,415,437,0],[405,414,440,463,0],
    [346,369,440,440,1],[311,323,370,375,1],[319,323,343,349,0],[325,342,347,365,0],[306,322,347,353,1],
    [319,322,367,367,0],[365,366,391,394,0],[374,390,400,419,0],[374,378,400,400,1],[365,378,386,403,0],
    [345,376,386,396,1],[323,376,424,447,0],[362,370,424,498,1],[291,299,371,390,1],[285,299,352,356,0],
    [325,351,446,480,0],[394,445,516,516,0],[480,504,516,584,1],[396,400,505,507,1],[376,385,401,440,1],
    [352,385,406,410,0],[347,361,406,411,1],[336,361,386,386,0],[268,273,386,394,1],[262,273,315,331,0],
    [314,314,357,394,0],[340,351,357,389,1],[346,351,369,385,0],[362,363,369,396,1],[322,331,364,368,1],
    [319,331,346,361,0],[325,338,346,369,1],[309,316,339,344,1],[273,293,317,328,1],[291,293,404,415,0],
    [354,403,489,501,0],[443,478,489,496,1],[397,398,479,530,1],[386,398,426,436,0],[372,383,426,427,1],
    [376,383,409,449,0],[378,408,422,451,0],[394,421,435,450,0],[364,407,435,442,1],[395,407,438,440,0],
    [430,437,466,486,0],[168,295,466,520,1],[284,295,370,439,0],[316,369,372,382,0],[347,359,372,390,1],
    [331,343,360,396,1],[288,343,367,371,0],[356,366,450,486,0],[447,449,511,539,0],[486,509,510,527,1],
    [481,500,510,533,1],[445,450,501,505,1],[425,442,451,479,1],[426,442,485,489,0],[442,484,564,628,0],
    [556,563,566,622,0],[451,490,566,577,1],[478,490,550,550,0],[474,484,550,566,1],[469,484,520,544,0],
    [516,519,642,679,0],[490,497,642,651,1],[462,497,518,547,0],[368,386,518,535,1],[357,386,398,419,0],
    [257,310,398,418,1],[292,310,370,387,0],[298,305,370,379,1],[281,305,337,368,0],[291,303,337,344,1],
    [287,302,304,345,1],[289,290,303,311,1],[290,290,300,314,0],[262,264,300,304,1],[264,264,303,303,0],
    [260,279,303,303,1],[265,279,308,308,0],[306,307,680,745,0],[594,634,680,812,1],[527,634,663,705,0],
    [606,648,663,718,1],[637,648,733,750,0],[633,708,733,759,1],[616,694,709,757,1],[585,641,695,722,1],
    [536,588,642,654,1],[568,588,641,667,0],[629,640,755,789,0],[640,692,755,767,1],[649,665,693,711,1],
    [617,637,666,745,1],[489,515,639,639,1],[394,426,516,533,1],[362,411,427,430,1],[408,411,495,524,0],
    [473,494,582,638,0],[556,557,582,608,1],[547,556,618,627,0]
];

const prices = [
    ['0.65500', 134], ['0.65450', 171], ['0.65400', 208], ['0.65350', 245], ['0.65300', 282],
    ['0.65250', 319], ['0.65200', 356], ['0.65150', 393], ['0.65100', 430], ['0.65050', 467],
    ['0.65000', 504], ['0.64940', 549], ['0.64880', 594], ['0.64820', 639], ['0.64760', 683],
    ['0.64700', 728], ['0.64650', 766], ['0.64600', 803], ['0.64555', 837], ['0.64513', 868]
];

const times = [['8', 21], ['10', 217], ['11', 397], ['12', 577], ['13', 757], ['15', 922]];

function add(parent, name, attrs, text) {
    const el = document.createElementNS(SVG, name);
    for (const key in attrs) el.setAttribute(key, attrs[key]);
    if (text) el.textContent = text;
    parent.appendChild(el);
}

const plot = document.getElementById('plot');
candles.forEach(([high, top, bottom, low, up], i) => {
    const x = Math.round(i * STEP - 1.131);
    add(plot, 'rect', { class: 'wick', x: x, y: high - TOP, width: 1, height: low - high });
    if (bottom - top < 3) {
        add(plot, 'rect', { class: 'wick', x: x - 2, y: top - TOP, width: 5, height: bottom - top });
    } else {
        add(plot, 'rect', {
            class: up ? 'up' : 'fall',
            x: x - 1.5, y: top - TOP + 0.5, width: 4, height: bottom - top - 1
        });
    }
});
add(plot, 'line', { class: 'last-line', x1: 0, x2: '100%', y1: 528.5, y2: 528.5 });

const axis = document.getElementById('prices');
prices.forEach(([label, y]) => add(axis, 'text', { x: 9, y: y - TOP + 5 }, label));
add(axis, 'rect', { class: 'price-tag', x: 0, y: 519, width: 60, height: 19, rx: 2 });
add(axis, 'text', { class: 'price-tag-text', x: 9, y: 533 }, '0.64850');

const timeAxis = document.getElementById('times');
times.forEach(([label, x]) => add(timeAxis, 'text', { x: x, y: 19, 'text-anchor': 'middle' }, label));
```
